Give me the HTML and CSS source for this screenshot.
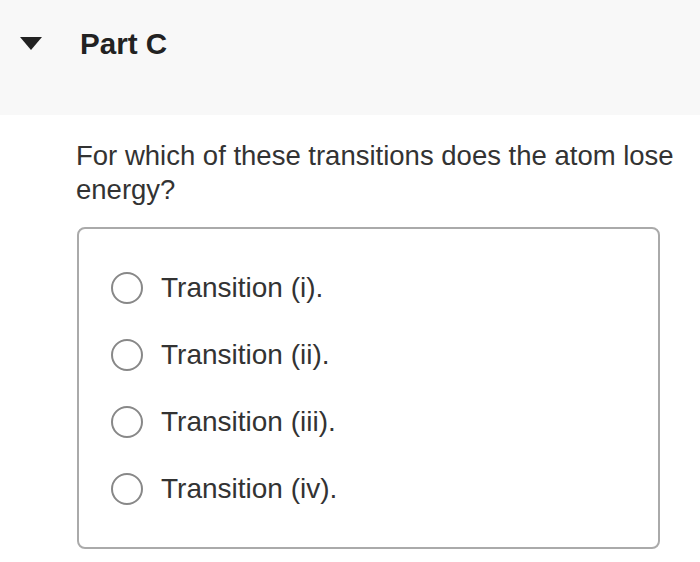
FILE: index.html
```html
<!DOCTYPE html>
<html>
<head>
<meta charset="utf-8">
<link rel="stylesheet" href="styles.css">
</head>
<body>
<div class="header">
  <span class="caret"></span>
  <h2 class="title">Part C</h2>
</div>
<div class="content">
  <p class="question">For which of these transitions does the atom lose energy?</p>
  <div class="choices">
    <label class="choice"><span class="radio"></span><span class="label">Transition (i).</span></label>
    <label class="choice"><span class="radio"></span><span class="label">Transition (ii).</span></label>
    <label class="choice"><span class="radio"></span><span class="label">Transition (iii).</span></label>
    <label class="choice"><span class="radio"></span><span class="label">Transition (iv).</span></label>
  </div>
</div>
</body>
</html>
```
FILE: styles.css
```css
html, body {
  margin: 0;
  padding: 0;
  background: #fff;
  font-family: "Liberation Sans", Arial, sans-serif;
  color: #333;
}
.header {
  height: 115px;
  background: #f8f8f8;
  display: flex;
  align-items: flex-start;
  box-sizing: border-box;
  padding-top: 29px;
}
.caret {
  width: 0;
  height: 0;
  border-left: 11px solid transparent;
  border-right: 11px solid transparent;
  border-top: 13px solid #222;
  margin: 8px 0 0 20px;
}
.title {
  margin: 0 0 0 38px;
  font-size: 29.6px;
  font-weight: bold;
  color: #222;
  line-height: 30px;
}
.content {
  padding: 0 8px 0 76px;
}
.question {
  margin: 24px 0 0 0;
  font-size: 27.5px;
  line-height: 34px;
  color: #333;
}
.choices {
  margin: 20px 0 0 1px;
  width: 583px;
  box-sizing: border-box;
  border: 2px solid #aaa;
  border-radius: 8px;
  padding: 43px 0 42px 32px;
  display: flex;
  flex-direction: column;
  gap: 35px;
}
.choice {
  display: flex;
  align-items: center;
  height: 32px;
}
.radio {
  width: 28px;
  height: 28px;
  border: 2.5px solid #888;
  border-radius: 50%;
  flex: none;
}
.label {
  margin-left: 18px;
  font-size: 28px;
  color: #333;
}
```
